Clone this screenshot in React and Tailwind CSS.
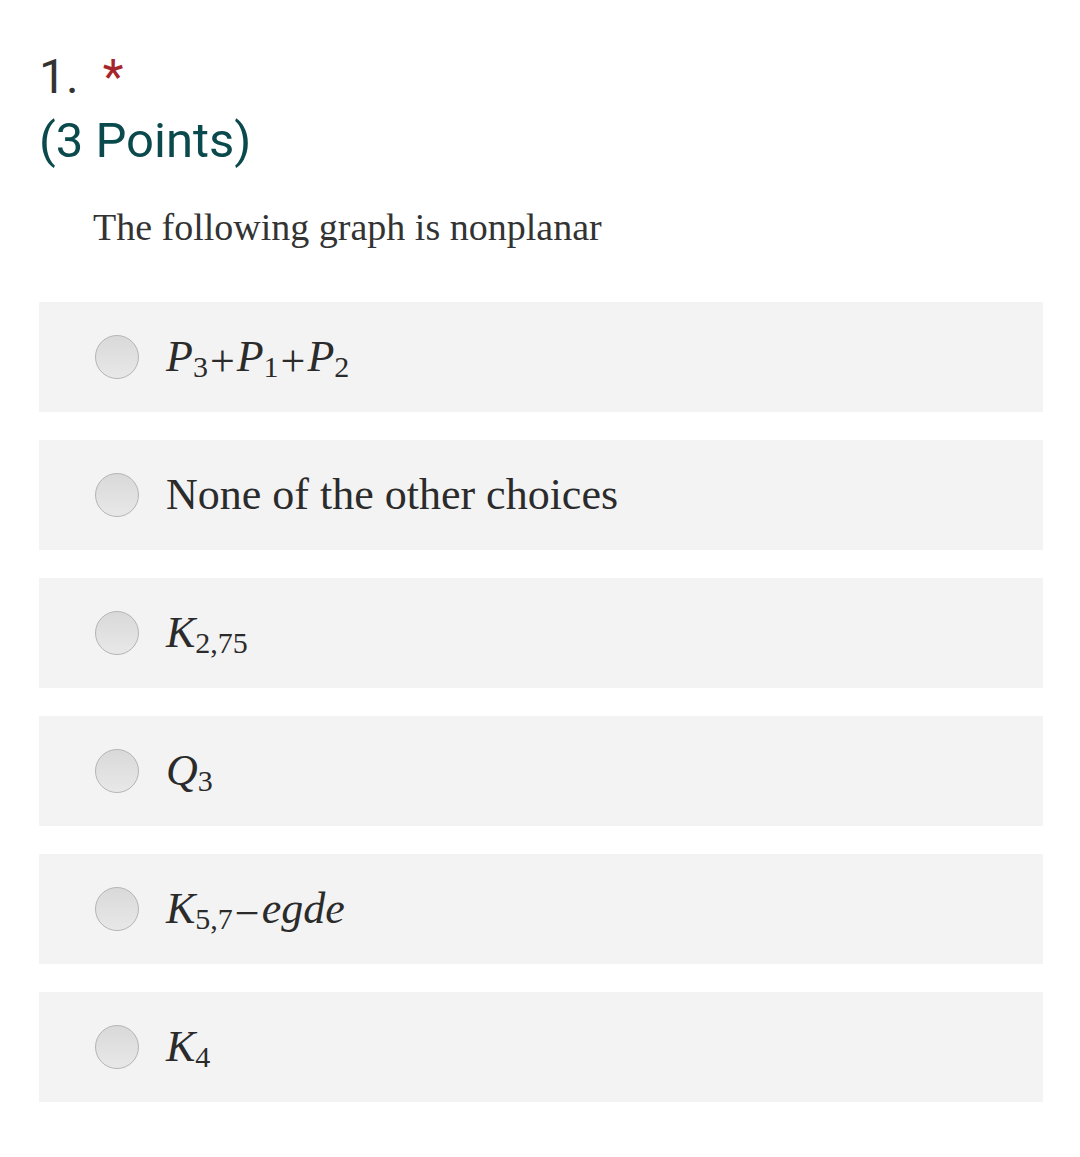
import React from 'react';

const serif = { fontFamily: '"Liberation Serif", "Times New Roman", serif' };

// Italic math letter
function V({ children }) {
  return <span className="italic">{children}</span>;
}

// Subscript, dropped below the baseline without growing the line box
function Sub({ children }) {
  return <span className="align-[-6px] leading-[0] text-[30px] not-italic">{children}</span>;
}

// Binary operator, sat a little lower like the math axis in the picture
function Op({ children }) {
  return <span className="mx-[2px] align-[-5px] leading-[0]">{children}</span>;
}

const choices = [
  {
    id: 'a',
    label: (
      <>
        <V>P</V><Sub>3</Sub><Op>+</Op><V>P</V><Sub>1</Sub><Op>+</Op><V>P</V><Sub>2</Sub>
      </>
    ),
  },
  { id: 'b', label: <>None of the other choices</> },
  {
    id: 'c',
    label: (
      <>
        <V>K</V><Sub>2,75</Sub>
      </>
    ),
  },
  {
    id: 'd',
    label: (
      <>
        <V>Q</V><Sub>3</Sub>
      </>
    ),
  },
  {
    id: 'e',
    label: (
      <>
        <V>K</V><Sub>5,7</Sub><Op>−</Op><V>egde</V>
      </>
    ),
  },
  {
    id: 'f',
    label: (
      <>
        <V>K</V><Sub>4</Sub>
      </>
    ),
  },
];

function Radio() {
  return (
    <span className="block w-[44px] h-[44px] shrink-0 rounded-full border border-[#b5b5b5] bg-gradient-to-b from-[#d9d9d9] to-[#e8e8e8]" />
  );
}

function ChoiceRow({ label }) {
  return (
    <div className="flex items-center gap-[27px] h-[110px] bg-[#f3f3f3] pl-[56px]">
      <Radio />
      <span className="text-[44px] text-[#2b2b2b] leading-normal whitespace-nowrap" style={serif}>
        {label}
      </span>
    </div>
  );
}

export default function App() {
  return (
    <div className="flex flex-col bg-white min-h-[1157px] w-[1080px] pt-[45px] pl-[39px] pr-[37px]">
      <div className="font-['Roboto',_sans-serif] text-[48px] leading-[64px]">
        <div className="flex gap-[24px] text-[#333333]">
          <span>1.</span>
          <span className="text-[#a4262c]">*</span>
        </div>
        <div className="text-[49px] text-[#0b4a4c]">(3 Points)</div>
      </div>

      <p className="mt-[30px] pl-[54px] text-[38px] leading-[48px] text-[#333333]" style={serif}>
        The following graph is nonplanar
      </p>

      <div className="mt-[51px] flex flex-col gap-[28px]">
        {choices.map((c) => (
          <ChoiceRow key={c.id} label={c.label} />
        ))}
      </div>
    </div>
  );
}
